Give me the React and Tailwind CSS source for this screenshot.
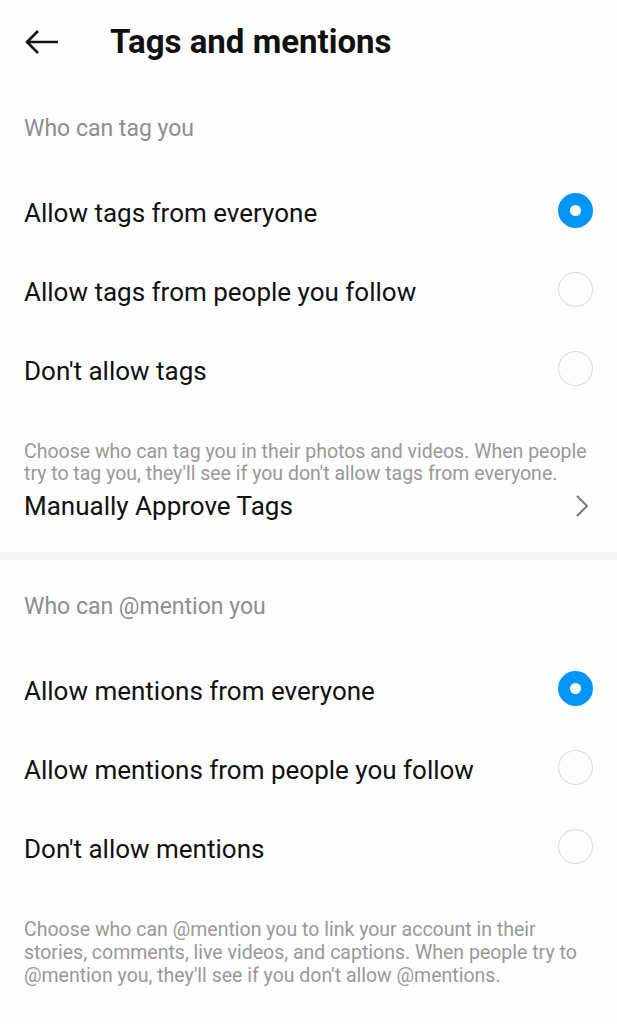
import React, { useState } from "react";

const font = { fontFamily: "Roboto, 'Noto Sans', sans-serif" };

function Radio({ checked }) {
    return checked ? (
        <div className="w-[35px] h-[35px] rounded-full bg-[#0095f6] flex items-center justify-center">
            <div className="w-[11px] h-[11px] rounded-full bg-white" />
        </div>
    ) : (
        <div className="w-[35px] h-[35px] rounded-full border-[1.5px] border-[#d9d9d9]" />
    );
}

function OptionGroup({ options, value, onChange }) {
    return (
        <div>
            {options.map((opt, i) => (
                <button
                    key={opt}
                    onClick={() => onChange(i)}
                    className="w-full h-[79px] flex items-center justify-between pl-[24px] pr-[24px] text-left"
                >
                    <span className="pt-[5px] text-[26px] leading-[32px] text-[#111]">{opt}</span>
                    <Radio checked={value === i} />
                </button>
            ))}
        </div>
    );
}

export default function App() {
    const [tags, setTags] = useState(0);
    const [mentions, setMentions] = useState(0);

    return (
        <div style={font} className="w-[617px] h-[1024px] bg-[#fdfdfd] overflow-hidden">
            <div className="h-[84px] flex items-center">
                <div className="w-[110px] pl-[25px]">
                    <svg width="34" height="26" viewBox="0 0 34 26" fill="none">
                        <path
                            d="M33 13H2M13 2L2 13l11 11"
                            stroke="#111"
                            strokeWidth="2.6"
                        />
                    </svg>
                </div>
                <h1 className="text-[33px] leading-[40px] font-bold text-[#111]">
                    Tags and mentions
                </h1>
            </div>

            <div className="pt-[31px] px-[24px] text-[23px] leading-[28px] text-[#8e8e8e]">
                Who can tag you
            </div>
            <div className="mt-[28px]">
                <OptionGroup
                    options={[
                        "Allow tags from everyone",
                        "Allow tags from people you follow",
                        "Don't allow tags",
                    ]}
                    value={tags}
                    onChange={setTags}
                />
            </div>
            <p className="mt-[33px] pl-[24px] pr-[30px] text-[19.5px] leading-[22px] text-[#999]">
                Choose who can tag you in their photos and videos. When people
                try to tag you, they'll see if you don't allow tags from
                everyone.
            </p>
            <div className="h-[42px] flex items-center justify-between pl-[24px] pr-[28px]">
                <span className="text-[26px] leading-[32px] text-[#111]">
                    Manually Approve Tags
                </span>
                <svg width="14" height="24" viewBox="0 0 14 24" fill="none">
                    <path d="M2 2l10 10L2 22" stroke="#777" strokeWidth="2" />
                </svg>
            </div>

            <div className="mt-[25px] h-[8px] bg-[#f4f4f4]" />

            <div className="pt-[33px] px-[24px] text-[23px] leading-[28px] text-[#8e8e8e]">
                Who can @mention you
            </div>
            <div className="mt-[28px]">
                <OptionGroup
                    options={[
                        "Allow mentions from everyone",
                        "Allow mentions from people you follow",
                        "Don't allow mentions",
                    ]}
                    value={mentions}
                    onChange={setMentions}
                />
            </div>
            <p className="mt-[32px] pl-[24px] pr-[30px] text-[19.5px] leading-[23px] text-[#999]">
                Choose who can @mention you to link your account in their
                stories, comments, live videos, and captions. When people try
                to @mention you, they'll see if you don't allow @mentions.
            </p>
        </div>
    );
}
